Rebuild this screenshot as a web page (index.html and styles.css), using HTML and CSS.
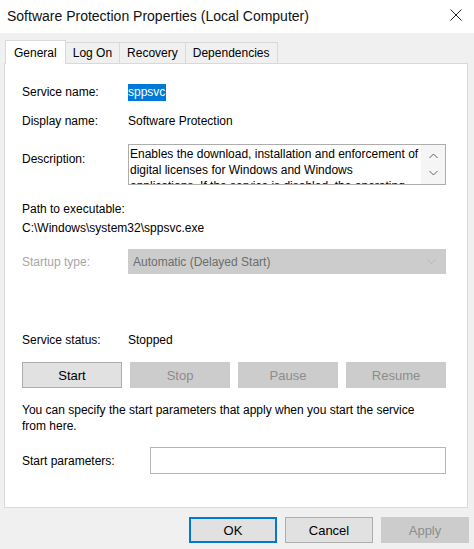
FILE: index.html
```html
<!DOCTYPE html>
<html lang="en">
<head>
  <meta charset="UTF-8">
  <title>Software Protection Properties (Local Computer)</title>
  <link rel="stylesheet" href="styles.css">
</head>
<body>
  <div class="window">
    <div class="titlebar">
      <span class="title">Software Protection Properties (Local Computer)</span>
      <svg class="close" width="12" height="12" viewBox="0 0 12 12">
        <path d="M0.5 0.5 L11.5 11.5 M11.5 0.5 L0.5 11.5" stroke="#222" stroke-width="1" fill="none"/>
      </svg>
    </div>

    <div class="body">
      <div class="tabs">
        <div class="tab active">General</div>
        <div class="tab">Log On</div>
        <div class="tab">Recovery</div>
        <div class="tab">Dependencies</div>
      </div>

      <div class="panel">
        <div class="row r-service">
          <span class="label">Service name:</span>
          <span class="value"><span class="selected">sppsvc</span></span>
        </div>
        <div class="row r-display">
          <span class="label">Display name:</span>
          <span class="value">Software Protection</span>
        </div>
        <div class="row r-desc">
          <span class="label desc-label">Description:</span>
          <div class="textbox">
            <div class="textbox-text">Enables the download, installation and enforcement of digital licenses for Windows and Windows applications. If the service is disabled, the operating</div>
            <div class="scroll">
              <svg width="9" height="6" viewBox="0 0 9 6"><path d="M0.5 5 L4.5 1 L8.5 5" stroke="#606060" fill="none"/></svg>
              <svg width="9" height="6" viewBox="0 0 9 6"><path d="M0.5 1 L4.5 5 L8.5 1" stroke="#606060" fill="none"/></svg>
            </div>
          </div>
        </div>
        <div class="path-label">Path to executable:</div>
        <div class="path-value">C:\Windows\system32\sppsvc.exe</div>
        <div class="row r-startup">
          <span class="label disabled">Startup type:</span>
          <div class="combo">
            <span>Automatic (Delayed Start)</span>
            <svg width="9" height="5" viewBox="0 0 9 5"><path d="M0.5 0.5 L4.5 4.5 L8.5 0.5" stroke="#b8b8b8" fill="none"/></svg>
          </div>
        </div>
        <div class="row r-status">
          <span class="label">Service status:</span>
          <span class="value">Stopped</span>
        </div>
        <div class="service-buttons">
          <button class="btn">Start</button>
          <button class="btn" disabled>Stop</button>
          <button class="btn" disabled>Pause</button>
          <button class="btn" disabled>Resume</button>
        </div>
        <p class="hint">You can specify the start parameters that apply when you start the service from here.</p>
        <div class="row r-params">
          <span class="label params-label">Start parameters:</span>
          <input type="text" class="params-input">
        </div>
      </div>

      <div class="footer">
        <button class="btn dlg default">OK</button>
        <button class="btn dlg">Cancel</button>
        <button class="btn dlg" disabled>Apply</button>
      </div>
    </div>
  </div>
</body>
</html>
```

FILE: styles.css
```css
body {
  margin: 0;
  padding: 0;
  font-family: "Liberation Sans", Arial, sans-serif;
  font-size: 12px;
  color: #000;
  background-color: #f0f0f0;
}

.window {
  width: 474px;
  height: 549px;
  overflow: hidden;
}

.titlebar {
  height: 33px;
  background-color: #fff;
  display: flex;
  align-items: center;
  justify-content: space-between;
  padding: 0 12px 0 7px;
  box-sizing: border-box;
}

.title {
  font-size: 14px;
  color: #111;
  margin-top: -2px;
}

.close {
  margin-top: -3px;
}

.body {
  padding: 6px 6px 0 4px;
}

/* tab strip */
.tabs {
  display: flex;
  align-items: flex-end;
  height: 24px;
  padding-left: 1px;
}

.tab {
  height: 21px;
  line-height: 21px;
  padding: 0 7px;
  border: 1px solid #d9d9d9;
  border-bottom: none;
  border-left: none;
  box-sizing: border-box;
  font-size: 12px;
  background-color: #f0f0f0;
}

.tab.active {
  height: 24px;
  line-height: 24px;
  padding: 0 8px;
  border-left: 1px solid #d9d9d9;
  background-color: #fff;
  position: relative;
  top: 1px;
}

/* white tab page */
.panel {
  background-color: #fff;
  border: 1px solid #d9d9d9;
  height: 445px;
  box-sizing: border-box;
  padding: 20px 21px 0 17px;
}

.row {
  display: flex;
  align-items: center;
}

.label {
  width: 106px;
  flex-shrink: 0;
}

.disabled {
  color: #a6a6a6;
}

.r-service {
  height: 16px;
}

.selected {
  background-color: #0078d7;
  color: #fff;
  padding: 1px 1px 2px 0;
}

.r-display {
  height: 16px;
  margin-top: 13px;
}

.r-desc {
  margin-top: 15px;
  align-items: flex-start;
}

.desc-label {
  margin-top: 8px;
}

.textbox {
  flex: 1;
  height: 41px;
  border: 1px solid #adadad;
  box-sizing: border-box;
  display: flex;
  overflow: hidden;
}

.textbox-text {
  flex: 1;
  padding: 1px 0 0 1px;
  line-height: 16px;
  height: 39px;
  overflow: hidden;
}

.scroll {
  width: 24px;
  background-color: #f5f5f5;
  display: flex;
  flex-direction: column;
  align-items: center;
  justify-content: space-between;
  padding: 8px 0 8px;
  box-sizing: border-box;
}

.path-label {
  margin-top: 16px;
  line-height: 16px;
}

.path-value {
  margin-top: 3px;
  line-height: 16px;
}

.r-startup {
  margin-top: 13px;
}

.combo {
  flex: 1;
  height: 25px;
  background-color: #cccccc;
  border: 1px solid #cccccc;
  box-sizing: border-box;
  display: flex;
  align-items: center;
  justify-content: space-between;
  padding: 0 9px 0 4px;
  color: #6d6d6d;
}

.r-status {
  height: 16px;
  margin-top: 58px;
}

.service-buttons {
  display: flex;
  gap: 8px;
  margin-top: 14px;
}

.btn {
  font-family: "Liberation Sans", Arial, sans-serif;
  font-size: 13px;
  color: #000;
  background-color: #e1e1e1;
  border: 1px solid #adadad;
  height: 26px;
  padding: 0;
  flex: 1;
}

.btn:disabled {
  background-color: #cccccc;
  border-color: #cccccc;
  color: #8c8c8c;
}

.hint {
  margin: 14px 0 0;
  line-height: 16px;
  max-width: 416px;
}

.r-params {
  margin-top: 13px;
}

.params-label {
  width: 128px;
}

.params-input {
  flex: 1;
  height: 27px;
  border: 1px solid #b5b5b5;
  box-sizing: border-box;
  margin: 0;
}

.footer {
  display: flex;
  justify-content: flex-end;
  gap: 8px;
  padding: 9px 0 0;
  margin-right: -1px;
}

.btn.dlg {
  flex: none;
  width: 88px;
  height: 26px;
}

.btn.default {
  border: 2px solid #0078d7;
}
```
